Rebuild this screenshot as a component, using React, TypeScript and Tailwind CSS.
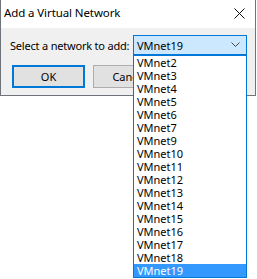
import React from "react";

const items = [
  "VMnet2","VMnet3","VMnet4","VMnet5","VMnet6","VMnet7","VMnet9","VMnet10","VMnet11",
  "VMnet12","VMnet13","VMnet14","VMnet15","VMnet16","VMnet17","VMnet18","VMnet19",
];

export default function App() {
  return (
    <div
      className="relative w-[257px] h-[279px] bg-white text-[11px] text-black overflow-hidden whitespace-nowrap"
      style={{ fontFamily: '"Segoe UI", "Noto Sans", sans-serif' }}
    >
      <div className="w-[256px] h-[96px] flex flex-col border-x border-b border-[#6f747a]">
        <div className="h-[28px] bg-white flex items-center justify-between pl-[3px] pr-[10px]">
          <span className="text-[11.5px] leading-none -mt-[2px] tracking-[-0.1px]">Add a Virtual Network</span>
          <svg width="11" height="11" viewBox="0 0 11 11" className="-mt-[2px]">
            <path d="M0.5 0.5 L10.5 10.5 M10.5 0.5 L0.5 10.5" stroke="#111" strokeWidth="1" fill="none" />
          </svg>
        </div>
        <div className="flex-1 bg-[#f0f0f0] flex flex-col">
          <div className="flex items-center mt-[7px] h-[20px]">
            <span className="ml-[9px] w-[123px] leading-none tracking-[-0.2px]">Select a network to add:</span>
            <div className="w-[114px] h-[20px] border border-[#0078d7] bg-[#cce8ff] flex items-center justify-between pl-[3px] pr-[6px]">
              <span className="leading-none">VMnet19</span>
              <svg width="9" height="6" viewBox="0 0 9 6">
                <path d="M0.5 0.5 L4.5 4.5 L8.5 0.5" stroke="#444" strokeWidth="1" fill="none" />
              </svg>
            </div>
          </div>
          <div className="flex mt-[10px] ml-[11px] gap-[8px]">
            <div className="w-[73px] h-[23px] border-2 border-[#0078d7] bg-[#e1e1e1] flex items-center justify-center leading-none">
              OK
            </div>
            <div className="w-[73px] h-[23px] border border-[#adadad] bg-[#e1e1e1] flex items-center justify-center leading-none">
              Cancel
            </div>
          </div>
        </div>
      </div>
      <div className="absolute left-[133px] top-[55px] w-[114px] border border-[#0078d7] bg-white">
        {items.map((it) => (
          <div
            key={it}
            className={
              it === "VMnet19"
                ? "h-[13px] leading-[13px] pl-[3px] bg-[#3399ff] text-white"
                : "h-[13px] leading-[13px] pl-[3px]"
            }
          >
            {it}
          </div>
        ))}
      </div>
    </div>
  );
}
